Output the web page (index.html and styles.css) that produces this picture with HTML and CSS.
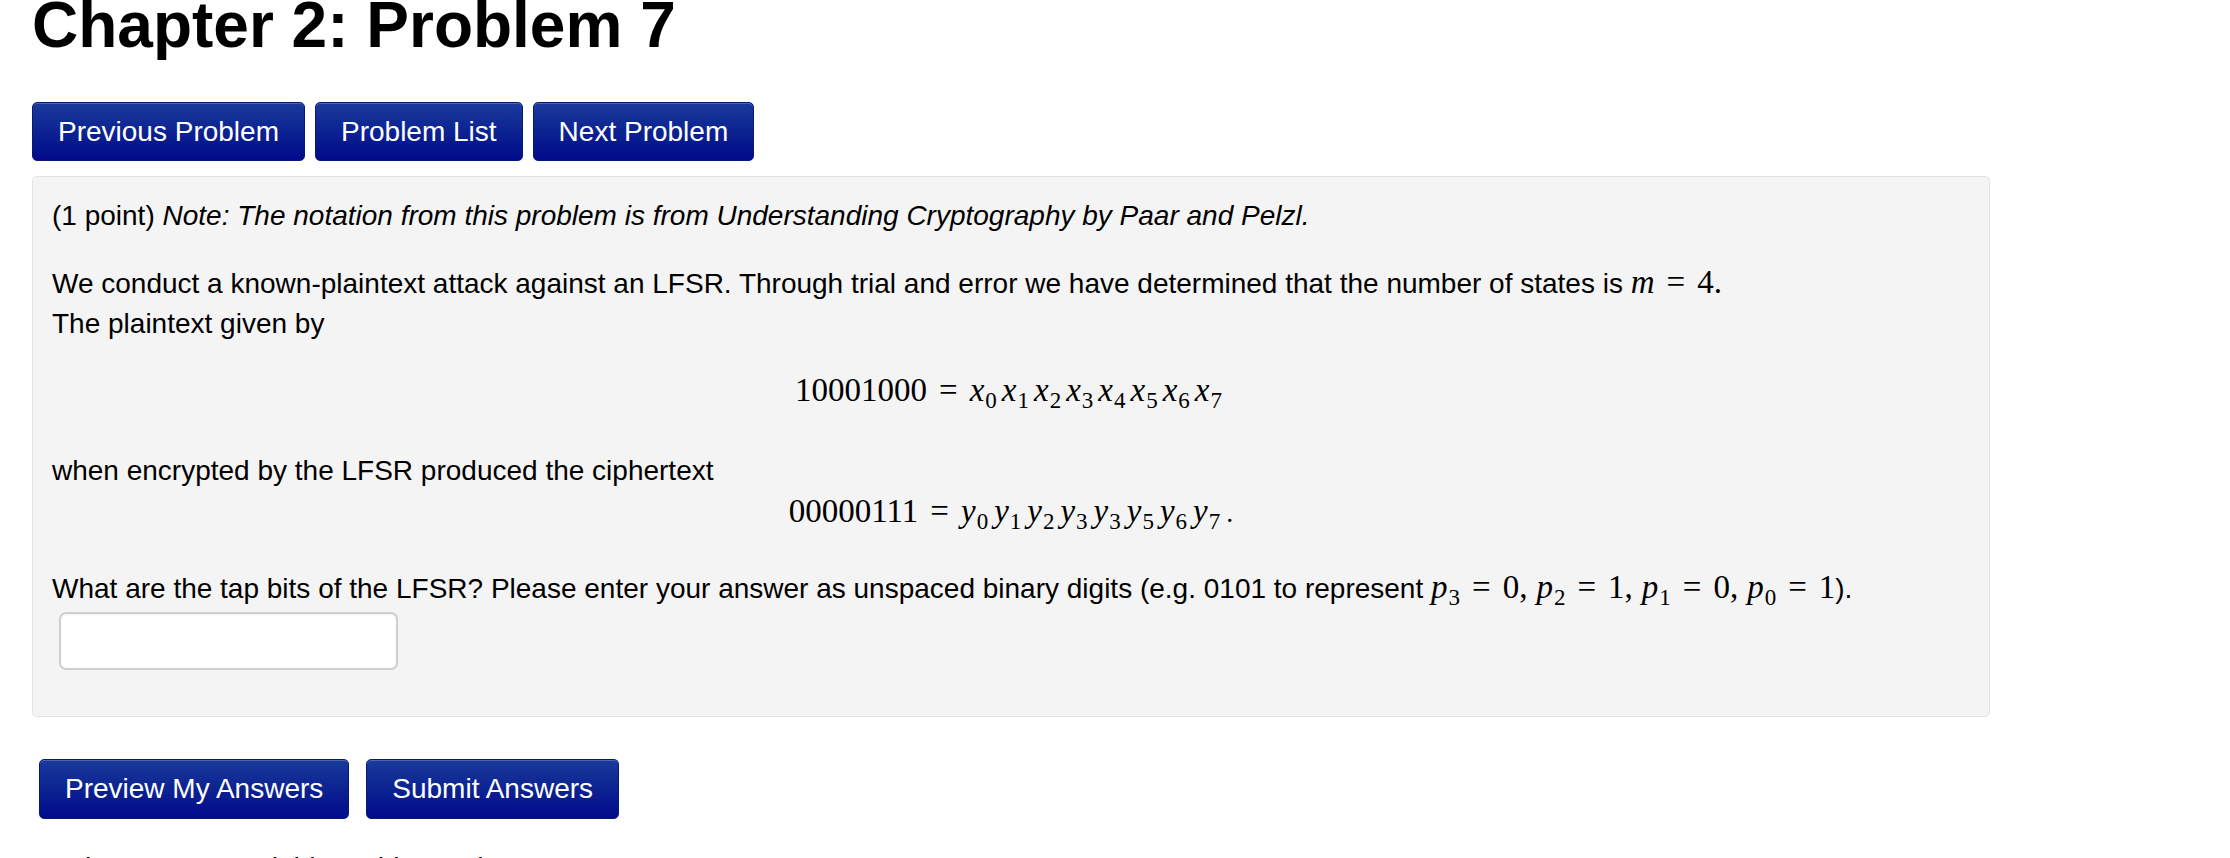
FILE: index.html
```html
<!DOCTYPE html>
<html lang="en">
<head>
<meta charset="utf-8">
<title>Chapter 2: Problem 7</title>
<link rel="stylesheet" href="styles.css">
</head>
<body>
<div class="page">
  <h1 class="title">Chapter 2: Problem 7</h1>

  <div class="nav">
    <button class="btn" type="button">Previous Problem</button>
    <button class="btn" type="button">Problem List</button>
    <button class="btn" type="button">Next Problem</button>
  </div>

  <div class="problem">
    <p class="para gap">(1 point) <em>Note: The notation from this problem is from Understanding Cryptography by Paar and Pelzl.</em></p>

    <p class="para">We conduct a known-plaintext attack against an LFSR. Through trial and error we have determined that the number of states is <span class="im"><i>m</i><span class="rel">=</span>4.</span><br>The plaintext given by</p>

    <div class="display eq1">10001000<span class="rel">=</span><span class="v"><i>x</i><sub>0</sub></span><span class="v"><i>x</i><sub>1</sub></span><span class="v"><i>x</i><sub>2</sub></span><span class="v"><i>x</i><sub>3</sub></span><span class="v"><i>x</i><sub>4</sub></span><span class="v"><i>x</i><sub>5</sub></span><span class="v"><i>x</i><sub>6</sub></span><span class="v"><i>x</i><sub>7</sub></span></div>

    <p class="para">when encrypted by the LFSR produced the ciphertext</p>

    <div class="display eq2">00000111<span class="rel">=</span><span class="v y"><i>y</i><sub>0</sub></span><span class="v y"><i>y</i><sub>1</sub></span><span class="v y"><i>y</i><sub>2</sub></span><span class="v y"><i>y</i><sub>3</sub></span><span class="v y"><i>y</i><sub>3</sub></span><span class="v y"><i>y</i><sub>5</sub></span><span class="v y"><i>y</i><sub>6</sub></span><span class="v y"><i>y</i><sub>7</sub></span><span class="dot">.</span></div>

    <p class="para">What are the tap bits of the LFSR? Please enter your answer as unspaced binary digits (e.g. 0101 to represent <span class="im"><i>p</i><sub>3</sub><span class="rel">=</span>0,<span class="thin"></span><i>p</i><sub>2</sub><span class="rel">=</span>1,<span class="thin"></span><i>p</i><sub>1</sub><span class="rel">=</span>0,<span class="thin"></span><i>p</i><sub>0</sub><span class="rel">=</span>1</span>).</p>

    <input class="answer" type="text" aria-label="answer">
  </div>

  <div class="actions">
    <button class="btn tall" type="button">Preview My Answers</button>
    <button class="btn tall" type="button">Submit Answers</button>
  </div>

  <p class="attempts">You have attempted this problem 0 times.</p>
</div>
</body>
</html>
```

FILE: styles.css
```css
* {
  box-sizing: border-box;
}

html, body {
  margin: 0;
  padding: 0;
  background: #ffffff;
}

body {
  font-family: "Liberation Sans", Arial, Helvetica, sans-serif;
  font-size: 28px;
  line-height: 40px;
  color: #000000;
}

.page {
  display: flow-root;
  padding: 0 32px;
}

.title {
  font-size: 64px;
  font-weight: bold;
  line-height: 70px;
  margin: -10px 0 0;
}

.nav {
  display: flex;
  gap: 10px;
  margin-top: 42px;
}

.btn {
  font-family: "Liberation Sans", Arial, Helvetica, sans-serif;
  font-size: 28px;
  line-height: 40px;
  color: #ffffff;
  padding: 9px 25px 8px;
  border: 1px solid #0a1a72;
  border-radius: 5px;
  background: linear-gradient(to bottom, #1a3a9c 0%, #0d2592 45%, #000a8b 100%);
  box-shadow: inset 0 1px 0 rgba(255, 255, 255, 0.22);
  cursor: pointer;
  margin: 0;
}

.btn.tall {
  padding: 9px 25px;
}

.problem {
  width: 1958px;
  margin-top: 15px;
  border: 1px solid #e2e2e2;
  border-radius: 5px;
  background: #f4f4f4;
  padding: 19px 19px 46px;
}

.para {
  margin: 0;
}

.para.gap {
  margin-bottom: 28px;
}

.im {
  font-family: "Liberation Serif", "Times New Roman", serif;
  font-size: 33px;
  line-height: 1;
  font-style: normal;
}

.im sub,
.display sub {
  font-size: 23px;
  line-height: 0;
  vertical-align: -7px;
}

.im sub {
  margin-left: 1px;
}

.rel {
  margin: 0 12px;
}

.thin {
  display: inline-block;
  width: 9px;
}

.display {
  font-family: "Liberation Serif", "Times New Roman", serif;
  font-size: 33px;
  line-height: 40px;
  text-align: center;
}

.display .rel {
  margin: 0 12px;
}

.eq1 {
  margin: 26px 0 41px;
}

.eq2 {
  margin: 0 0 36px;
}

.v i {
  margin-right: 1px;
}

.v sub {
  margin-right: 5px;
}

.v.y i {
  margin-right: 1px;
}

.v.y sub {
  margin-right: 6px;
}

.dot {
  font-size: 28px;
  margin-left: 0;
}

.answer {
  display: block;
  width: 339px;
  height: 58px;
  margin: 3px 0 0 7px;
  border: 2px solid #cfcfcf;
  border-radius: 7px;
  background: #ffffff;
  box-shadow: inset 0 1px 2px rgba(0, 0, 0, 0.06);
  font-family: "Liberation Sans", Arial, sans-serif;
  font-size: 28px;
  padding: 0 10px;
}

.actions {
  display: flex;
  gap: 17px;
  margin-top: 42px;
  padding-left: 7px;
}

.attempts {
  margin: 29px 0 0 -2px;
}
```
